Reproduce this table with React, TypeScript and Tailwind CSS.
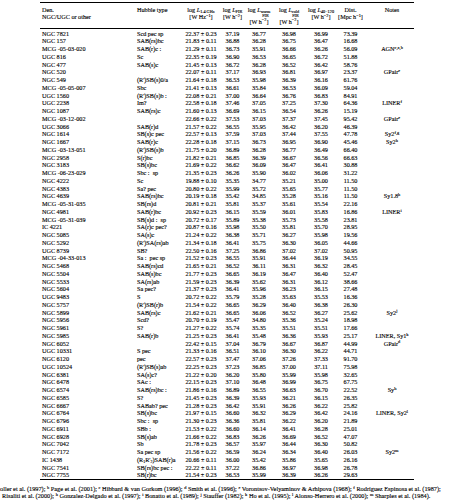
import type { ReactNode } from 'react';

type Row = [string, ReactNode, string, string, string, string, string, string, string];

const rows: Row[] = [
    ['NGC 7821', 'Scd pec sp', '22.37', '0.23', '37.19', '36.77', '36.98', '36.99', '73.39'],
    ['NGC 157', 'SAB(rs)bc', '21.83', '0.11', '36.88', '36.28', '36.75', '36.47', '16.68'],
    ['MCG -05-03-020', 'SAB(r)c :', '21.29', '0.11', '36.73', '35.91', '36.66', '36.26', '56.09'],
    ['UGC 816', 'Sc', '22.35', '0.19', '36.90', '36.53', '36.65', '36.72', '51.88'],
    ['NGC 477', 'SAB(s)c', '21.45', '0.13', '36.72', '36.28', '36.52', '36.42', '58.76'],
    ['NGC 520', '', '22.07', '0.11', '37.17', '36.93', '36.81', '36.97', '23.37'],
    ['NGC 549', "(R')SB(s)0/a", '21.64', '0.18', '36.53', '35.98', '36.39', '36.16', '61.76'],
    ['MCG -05-05-007', 'Sbc', '21.41', '0.13', '36.61', '35.84', '36.53', '36.09', '59.04'],
    ['UGC 1560', "(R')SB(s)b :", '22.08', '0.21', '37.00', '36.64', '36.76', '36.83', '84.91'],
    ['UGC 2238', 'Im?', '22.58', '0.18', '37.46', '37.05', '37.25', '37.30', '64.36'],
    ['NGC 1087', 'SAB(rs)c', '21.60', '0.13', '36.69', '36.15', '36.54', '36.26', '15.19'],
    ['MCG -03-12-002', '', '22.66', '0.22', '37.53', '37.03', '37.37', '37.45', '95.42'],
    ['UGC 3066', 'SAB(r)d', '21.57', '0.22', '36.55', '35.95', '36.42', '36.20', '46.39'],
    ['NGC 1614', 'SB(s)c pec', '22.57', '0.13', '37.59', '37.03', '37.44', '37.55', '47.78'],
    ['NGC 1667', 'SAB(r)c', '22.28', '0.18', '37.15', '36.73', '36.95', '36.90', '45.46'],
    ['MCG -03-13-051', "(R')SB(s)b", '21.75', '0.20', '36.89', '36.28', '36.77', '36.49', '66.40'],
    ['NGC 2958', 'S(r)bc', '21.82', '0.21', '36.85', '36.39', '36.67', '36.56', '66.63'],
    ['NGC 3183', 'SB(s)bc', '21.69', '0.22', '36.62', '36.09', '36.47', '36.41', '30.88'],
    ['MCG -06-23-029', 'Sbc :\u2002sp', '21.35', '0.23', '36.26', '35.90', '36.02', '36.06', '31.22'],
    ['NGC 4222', 'Sc', '19.88', '0.10', '35.35', '34.77', '35.21', '35.00', '11.50'],
    ['NGC 4383', 'Sa? pec', '20.80', '0.22', '35.99', '35.72', '35.65', '35.77', '11.50'],
    ['NGC 4639', 'SAB(rs)bc', '20.19', '0.18', '35.42', '34.85', '35.28', '35.16', '11.50'],
    ['MCG -05-31-035', 'SB(rs)d', '20.81', '0.21', '35.81', '35.37', '35.61', '35.54', '22.16'],
    ['NGC 4981', 'SAB(r)bc', '20.92', '0.23', '36.15', '35.59', '36.01', '35.83', '16.86'],
    ['MCG -05-31-039', 'SB(s)d :\u2002sp', '20.72', '0.17', '35.89', '35.38', '35.73', '35.58', '23.81'],
    ['IC 4221', 'SA(r)c pec?', '20.87', '0.16', '35.98', '35.50', '35.81', '35.70', '28.95'],
    ['NGC 5085', 'SA(s)c', '21.24', '0.22', '36.38', '35.71', '36.27', '35.98', '19.56'],
    ['NGC 5292', "(R')SA(rs)ab", '21.34', '0.18', '36.41', '35.75', '36.30', '36.05', '44.66'],
    ['UGC 8739', 'SB?', '22.50', '0.16', '37.25', '36.86', '37.02', '37.02', '50.95'],
    ['MCG -04-33-013', 'Sa :\u2002pec sp', '21.52', '0.23', '36.55', '35.91', '36.44', '36.19', '34.55'],
    ['NGC 5468', 'SAB(rs)cd', '21.65', '0.21', '36.52', '36.11', '36.31', '36.32', '28.45'],
    ['NGC 5504', 'SAB(s)bc', '21.77', '0.23', '36.65', '36.19', '36.47', '36.40', '52.47'],
    ['NGC 5533', 'SA(rs)ab', '21.59', '0.23', '36.39', '35.62', '36.31', '36.12', '38.66'],
    ['NGC 5604', 'Sa pec?', '21.37', '0.23', '36.41', '35.96', '36.23', '36.15', '27.48'],
    ['UGC 9483', 'S', '20.72', '0.22', '35.79', '35.28', '35.63', '35.53', '16.36'],
    ['NGC 5757', "(R')SB(r)b", '21.54', '0.22', '36.65', '36.29', '36.40', '36.38', '26.30'],
    ['NGC 5899', 'SAB(rs)c', '21.62', '0.21', '36.65', '36.06', '36.52', '36.27', '25.62'],
    ['NGC 5956', 'Scd?', '20.70', '0.19', '35.47', '34.80', '35.36', '35.24', '18.98'],
    ['NGC 5961', 'S?', '21.27', '0.22', '35.74', '35.35', '35.51', '35.51', '17.66'],
    ['NGC 5985', 'SAB(r)b', '21.25', '0.23', '36.41', '35.48', '36.36', '35.93', '25.17'],
    ['NGC 6052', '', '22.42', '0.15', '37.04', '36.79', '36.67', '36.87', '44.99'],
    ['UGC 10331', 'S pec', '21.33', '0.16', '36.51', '36.10', '36.30', '36.22', '44.71'],
    ['NGC 6120', 'pec', '22.57', '0.23', '37.47', '37.06', '37.26', '37.33', '91.70'],
    ['UGC 10524', "(R')SB(s)ab", '22.25', '0.23', '37.23', '36.85', '37.00', '37.11', '75.98'],
    ['NGC 6381', 'SA(s)c?', '21.22', '0.20', '36.20', '35.80', '35.99', '35.98', '32.65'],
    ['NGC 6478', 'SAc :', '22.15', '0.23', '37.10', '36.48', '36.99', '36.75', '67.75'],
    ['NGC 6574', 'SAB(rs)bc :', '21.86', '0.16', '36.89', '36.55', '36.63', '36.70', '22.52'],
    ['NGC 6585', 'S?', '21.45', '0.23', '36.39', '35.93', '36.21', '36.15', '26.35'],
    ['NGC 6667', 'SABab? pec', '21.28', '0.23', '36.42', '35.91', '36.26', '36.22', '25.82'],
    ['NGC 6764', 'SB(s)bc', '21.97', '0.15', '36.60', '36.32', '36.29', '36.42', '24.16'],
    ['NGC 6796', 'Sbc :\u2002sp', '21.30', '0.23', '36.36', '35.81', '36.22', '36.20', '21.89'],
    ['NGC 6911', 'SBb :', '21.53', '0.22', '36.60', '36.14', '36.41', '36.28', '25.01'],
    ['NGC 6928', 'SB(s)ab', '21.66', '0.22', '36.83', '36.26', '36.69', '36.52', '47.07'],
    ['NGC 7042', 'Sb', '21.78', '0.23', '36.57', '35.97', '36.44', '36.30', '50.82'],
    ['NGC 7172', 'Sa pec sp', '21.56', '0.22', '36.59', '36.24', '36.34', '36.40', '26.03'],
    [
        'IC 1438',
        <>
            (R<sub className="text-[4px]">1</sub>R&apos;<sub className="text-[4px]">2</sub>)SAB(r)a
        </>,
        '20.66', '0.11', '36.00', '35.42', '35.86', '35.65', '26.16',
    ],
    ['NGC 7541', 'SB(rs)bc pec :', '22.22', '0.11', '37.22', '36.86', '36.97', '36.98', '26.78'],
    ['NGC 7755', 'SB(r)bc', '21.54', '0.23', '36.53', '35.99', '36.39', '36.26', '29.63'],
];

const notes: Record<string, [string, string]> = {
    'MCG -05-03-020': ['AGN', 'c,a,b'],
    'NGC 520': ['GPair', 'e'],
    'UGC 2238': ['LINER', 'f'],
    'MCG -03-12-002': ['GPair', 'e'],
    'NGC 1614': ['Sy2', 'f,g'],
    'NGC 1667': ['Sy2', 'h'],
    'NGC 4639': ['Sy1.8', 'h'],
    'NGC 4981': ['LINER', 'i'],
    'NGC 5899': ['Sy2', 'j'],
    'NGC 5985': ['LINER, Sy1', 'k'],
    'NGC 6052': ['GPair', 'd'],
    'NGC 6574': ['Sy', 'h'],
    'NGC 6764': ['LINER, Sy2', 'l'],
    'NGC 7172': ['Sy2', 'm'],
};

const cols = 'grid grid-cols-[95px_47px_38px_25px_28px_32px_32px_27px_50px]';

function Sup({ children }: { children: ReactNode }) {
    return <sup className="text-[4.4px]">{children}</sup>;
}

function Unit({ children }: { children: ReactNode }) {
    return <span>[W {children}]</span>;
}

function StackL({ top, bottom }: { top: string; bottom: string }) {
    return (
        <>
            <i>L</i>
            <span className="inline-flex flex-col align-[-1px] text-[4.2px] leading-[4px]">
                <span>{top}</span>
                <span>{bottom}</span>
            </span>
        </>
    );
}

function Header() {
    return (
        <div className={`${cols} pt-[2.5px] pb-[3px] leading-[7.5px]`}>
            <div className="pl-[2px]">
                <div>Den.</div>
                <div>NGC/UGC or other</div>
            </div>
            <div className="pl-[2px]">Hubble type</div>
            <div className="text-center whitespace-nowrap">
                <div>
                    log <i>L</i>
                    <sub className="text-[4.3px]">1.4 GHz</sub>
                </div>
                <div>
                    <Unit>
                        Hz<Sup>−1</Sup>
                    </Unit>
                </div>
            </div>
            <div className="text-center whitespace-nowrap">
                <div>
                    log <i>L</i>
                    <sub className="text-[4.3px]">FIR</sub>
                </div>
                <div>
                    <Unit>
                        h<Sup>−2</Sup>
                    </Unit>
                </div>
            </div>
            <div className="text-center whitespace-nowrap">
                <div>
                    log <StackL top="warm" bottom="FIR" />
                </div>
                <div>
                    <Unit>
                        h<Sup>−2</Sup>
                    </Unit>
                </div>
            </div>
            <div className="text-center whitespace-nowrap">
                <div>
                    log <StackL top="cold" bottom="FIR" />
                </div>
                <div>
                    <Unit>
                        h<Sup>−2</Sup>
                    </Unit>
                </div>
            </div>
            <div className="text-center whitespace-nowrap">
                <div>
                    log <i>L</i>
                    <sub className="text-[4.3px]">40−120</sub>
                </div>
                <div>
                    <Unit>
                        h<Sup>−2</Sup>
                    </Unit>
                </div>
            </div>
            <div className="text-center whitespace-nowrap">
                <div>Dist.</div>
                <div>
                    [Mpc h<Sup>−1</Sup>]
                </div>
            </div>
            <div className="pl-[6px] text-center">Notes</div>
        </div>
    );
}

export default function App() {
    return (
        <div className="h-[500px] w-[474px] overflow-hidden bg-white font-['Liberation_Serif',serif] text-[6.2px] text-black [-webkit-text-stroke:0.12px_#000]">
            <div className="ml-[40px] w-[374px] pt-[2px]">
                <div className="h-px bg-black" />
                <Header />
                <div className="h-px bg-black" />
                <div className="pt-[0.5px]">
                    {rows.map((r) => {
                        const note = notes[r[0]];
                        return (
                            <div key={r[0]} className={`${cols} h-[7.75px] leading-[7.75px] whitespace-nowrap`}>
                                <div className="pl-[2px]">{r[0]}</div>
                                <div className="pl-[2px]">{r[1]}</div>
                                <div className="text-center">
                                    {r[2]} ± {r[3]}
                                </div>
                                <div className="text-center">{r[4]}</div>
                                <div className="text-center">{r[5]}</div>
                                <div className="text-center">{r[6]}</div>
                                <div className="text-center">{r[7]}</div>
                                <div className="text-center">{r[8]}</div>
                                <div className="pl-[6px] text-center">
                                    {note && (
                                        <>
                                            {note[0]}
                                            <Sup>{note[1]}</Sup>
                                        </>
                                    )}
                                </div>
                            </div>
                        );
                    })}
                </div>
                <div className="h-px bg-black" />
            </div>
            <div className="pt-[5px] text-[6.3px] leading-[7px] whitespace-nowrap">
                <div>
                    oller et al. (1997); <Sup>b</Sup> Page et al. (2001); <Sup>c</Sup> Hibbard &amp; van Gorkom (1996);{' '}
                    <Sup>d</Sup> Smith et al. (1996); <Sup>e</Sup> Vorontsov-Velyaminov &amp; Arhipova (1968);{' '}
                    <Sup>f</Sup> Rodríguez Espinosa et al. (1987);
                </div>
                <div className="pl-[2px]">
                    Risaliti et al. (2000); <Sup>h</Sup> Gonzalez-Delgado et al. (1997); <Sup>i</Sup> Bonatto et al. (1989);{' '}
                    <Sup>j</Sup> Stauffer (1982); <Sup>k</Sup> Ho et al. (1995); <Sup>l</Sup> Alonso-Herrero et al. (2000);{' '}
                    <Sup>m</Sup> Sharples et al. (1984).
                </div>
            </div>
        </div>
    );
}
